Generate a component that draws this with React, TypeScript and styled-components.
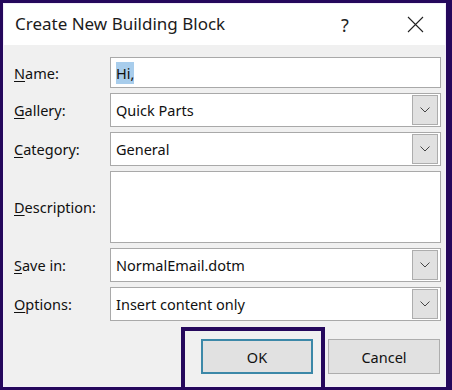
import React from 'react'
import styled, { createGlobalStyle } from 'styled-components'

const GlobalStyle = createGlobalStyle`
  html, body {
    margin: 0;
    padding: 0;
    background: #25085c;
  }
  * { box-sizing: border-box; }
`

const Frame = styled.div`
  width: 452px;
  height: 390px;
  padding: 3px 6px 3px 3px;
  background: #25085c;
  font-family: "Noto Sans", "Open Sans", sans-serif;
`

const Dialog = styled.div`
  position: relative;
  height: 100%;
  display: flex;
  flex-direction: column;
  background: #f0f0f0;
  border: 1px solid #f3eef9;
`

const TitleBar = styled.div`
  height: 41px;
  flex-shrink: 0;
  display: flex;
  align-items: center;
  background: #ffffff;
  padding: 0 7px 0 11px;
`

const Title = styled.div`
  flex: 1;
  font-size: 17px;
  color: #1b1b1b;
  margin-top: -2px;
`

const TitleButton = styled.div<{ $gap?: number }>`
  width: 46px;
  height: 41px;
  display: flex;
  align-items: center;
  justify-content: center;
  font-size: 18px;
  color: #222;
  margin-right: ${p => p.$gap ?? 0}px;
`

const Form = styled.div`
  display: grid;
  grid-template-columns: 96px 1fr;
  row-gap: 5px;
  padding: 12px 4px 0 10px;
`

const Label = styled.label<{ $h: number }>`
  height: ${p => p.$h}px;
  display: flex;
  align-items: center;
  font-size: 14.5px;
  color: #111;

  u {
    text-decoration-thickness: 1px;
    text-underline-offset: 2px;
  }
`

const Field = styled.div<{ $h: number }>`
  height: ${p => p.$h}px;
  display: flex;
  align-items: center;
  background: #ffffff;
  border: 1px solid #a9a9a9;
  padding: 0 2px 0 5px;
  font-size: 14.5px;
  color: #111;
`

const FieldText = styled.span`
  flex: 1;
`

const Selected = styled.span`
  background: #a8cdec;
  padding: 1px 0;
`

const DropButton = styled.div`
  width: 26px;
  height: 30px;
  display: flex;
  align-items: center;
  justify-content: center;
  background: #e1e1e1;
  border: 1px solid #adadad;
`

const Footer = styled.div`
  position: relative;
  display: flex;
  justify-content: flex-end;
  gap: 15px;
  padding: 18px 5px 0 0;
`

const Button = styled.div<{ $focus?: boolean }>`
  width: 112px;
  height: 35px;
  display: flex;
  align-items: center;
  justify-content: center;
  font-size: 14.5px;
  color: #111;
  background: #e1e1e1;
  border: ${p => (p.$focus ? '2px solid #3c88a8' : '1px solid #adadad')};
`

const Highlight = styled.div`
  position: absolute;
  left: 177px;
  top: 6px;
  width: 144px;
  height: 62px;
  border: 4px solid #25085c;
  border-bottom: none;
  pointer-events: none;
`

const Chevron = () => (
  <svg width="10" height="6" viewBox="0 0 10 6">
    <path d="M0.5 0.5 L5 5 L9.5 0.5" fill="none" stroke="#444" strokeWidth="1" />
  </svg>
)

const CloseIcon = () => (
  <svg width="17" height="17" viewBox="0 0 17 17">
    <path d="M1 1 L16 16 M16 1 L1 16" stroke="#222" strokeWidth="1.1" fill="none" />
  </svg>
)

type Row = { label: string; key: string; value?: React.ReactNode; h: number; drop?: boolean }

const rows: Row[] = [
  { label: 'ame:', key: 'N', value: <Selected>Hi,</Selected>, h: 31 },
  { label: 'allery:', key: 'G', value: 'Quick Parts', h: 34, drop: true },
  { label: 'ategory:', key: 'C', value: 'General', h: 34, drop: true },
  { label: 'escription:', key: 'D', h: 72 },
  { label: 'ave in:', key: 'S', value: 'NormalEmail.dotm', h: 34, drop: true },
  { label: 'ptions:', key: 'O', value: 'Insert content only', h: 34, drop: true },
]

export default function App() {
  return (
    <Frame>
      <GlobalStyle />
      <Dialog>
        <TitleBar>
          <Title>Create New Building Block</Title>
          <TitleButton $gap={24}>?</TitleButton>
          <TitleButton>
            <CloseIcon />
          </TitleButton>
        </TitleBar>
        <Form>
          {rows.map(r => (
            <React.Fragment key={r.key}>
              <Label $h={r.h}>
                <span><u>{r.key}</u>{r.label}</span>
              </Label>
              <Field $h={r.h}>
                <FieldText>{r.value}</FieldText>
                {r.drop && (
                  <DropButton>
                    <Chevron />
                  </DropButton>
                )}
              </Field>
            </React.Fragment>
          ))}
        </Form>
        <Footer>
          <Button $focus>OK</Button>
          <Button>Cancel</Button>
          <Highlight />
        </Footer>
      </Dialog>
    </Frame>
  )
}
